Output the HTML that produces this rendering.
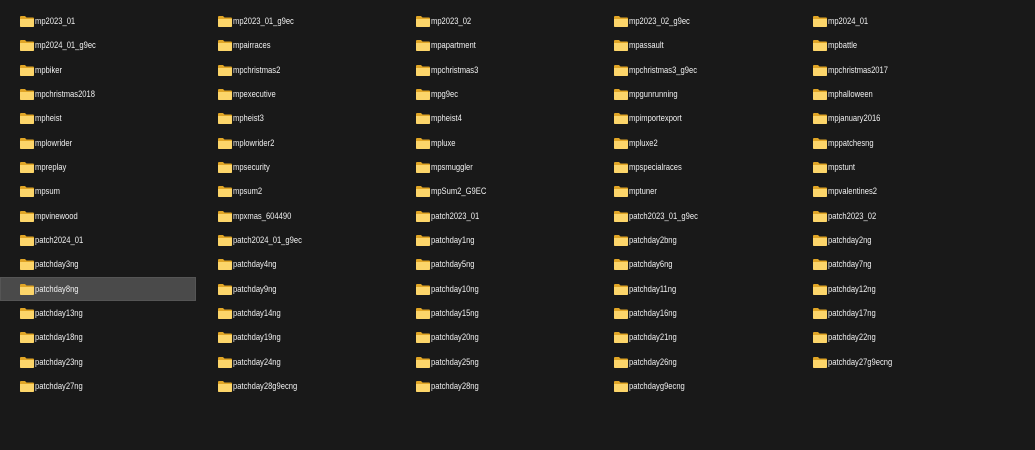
<!DOCTYPE html><html><head><style>
body{margin:0;width:1035px;height:450px;background:#191919;overflow:hidden;font-family:"Liberation Sans",sans-serif;font-size:9.5px;color:#f0f0f0;position:relative}
.i{position:absolute;height:24px;line-height:24px;white-space:nowrap}
.i svg{position:absolute;left:0;top:7px}
.i span{position:absolute;left:15px;top:1px;transform:scaleX(0.8);transform-origin:0 50%}
.sel{position:absolute;left:0;top:277px;width:196px;height:24px;background:#4a4a4a;border:1px solid #555;box-sizing:border-box}
</style></head><body>
<div class="sel"></div>
<div id="c"></div>
<script>
var n=["mp2023_01","mp2023_01_g9ec","mp2023_02","mp2023_02_g9ec","mp2024_01","mp2024_01_g9ec","mpairraces","mpapartment","mpassault","mpbattle","mpbiker","mpchristmas2","mpchristmas3","mpchristmas3_g9ec","mpchristmas2017","mpchristmas2018","mpexecutive","mpg9ec","mpgunrunning","mphalloween","mpheist","mpheist3","mpheist4","mpimportexport","mpjanuary2016","mplowrider","mplowrider2","mpluxe","mpluxe2","mppatchesng","mpreplay","mpsecurity","mpsmuggler","mpspecialraces","mpstunt","mpsum","mpsum2","mpSum2_G9EC","mptuner","mpvalentines2","mpvinewood","mpxmas_604490","patch2023_01","patch2023_01_g9ec","patch2023_02","patch2024_01","patch2024_01_g9ec","patchday1ng","patchday2bng","patchday2ng","patchday3ng","patchday4ng","patchday5ng","patchday6ng","patchday7ng","patchday8ng","patchday9ng","patchday10ng","patchday11ng","patchday12ng","patchday13ng","patchday14ng","patchday15ng","patchday16ng","patchday17ng","patchday18ng","patchday19ng","patchday20ng","patchday21ng","patchday22ng","patchday23ng","patchday24ng","patchday25ng","patchday26ng","patchday27g9ecng","patchday27ng","patchday28g9ecng","patchday28ng","patchdayg9ecng"];
var xs=[20,218,416,614,813],h="";
var ic='<svg width="14" height="11" viewBox="0 0 14 11"><path d="M0 1Q0 0 1 0H5L6.5 1.5H13Q14 1.5 14 2.5V10Q14 11 13 11H1Q0 11 0 10Z" fill="#e0a526"/><path d="M0 3H14V10Q14 11 13 11H1Q0 11 0 10Z" fill="#fcd56a"/></svg>';
n.forEach(function(t,k){var r=Math.floor(k/5),c=k%5;h+='<div class="i" style="left:'+xs[c]+'px;top:'+(9+r*24.33)+'px">'+ic+'<span>'+t+'</span></div>';});
document.getElementById("c").innerHTML=h;
</script>
</body></html>
